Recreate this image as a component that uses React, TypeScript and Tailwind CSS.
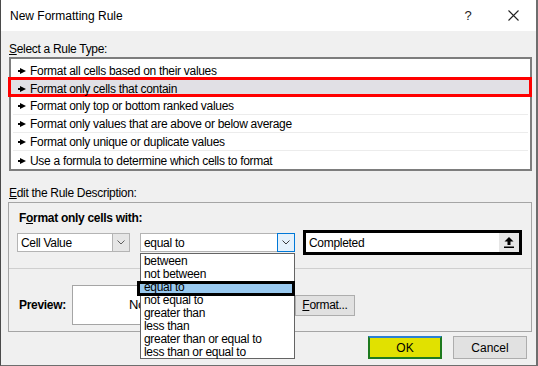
import React from "react";

const font = { fontFamily: '"Liberation Sans", Arial, sans-serif' };

const ruleTypes = [
  "Format all cells based on their values",
  "Format only cells that contain",
  "Format only top or bottom ranked values",
  "Format only values that are above or below average",
  "Format only unique or duplicate values",
  "Use a formula to determine which cells to format",
];

const operators = [
  "between",
  "not between",
  "equal to",
  "not equal to",
  "greater than",
  "less than",
  "greater than or equal to",
  "less than or equal to",
];

function Bullet() {
  return (
    <svg width="8" height="6" viewBox="0 0 8 6" className="shrink-0">
      <rect x="0" y="2" width="3" height="2" fill="#000" />
      <polygon points="2,0 8,3 2,6" fill="#000" />
    </svg>
  );
}

function Chevron({ color = "#5f5f5f" }: { color?: string }) {
  return (
    <svg width="8" height="5" viewBox="0 0 8 5">
      <polyline points="0.5,0.5 4,4 7.5,0.5" fill="none" stroke={color} strokeWidth="1" />
    </svg>
  );
}

function UploadIcon() {
  return (
    <svg width="10" height="11" viewBox="0 0 10 11">
      <polygon points="5,0 9.5,4.5 0.5,4.5" fill="#000" />
      <rect x="3.5" y="4" width="3" height="4" fill="#000" />
      <rect x="0" y="9.5" width="10" height="1.5" fill="#000" />
    </svg>
  );
}

export default function App() {
  return (
    <div
      className="w-[538px] h-[366px] flex flex-col bg-[#f0f0f0] border-l border-[#4a4a4a] border-r-2 border-r-[#6e6e6e] border-b border-b-[#6e6e6e] text-[12px] text-black overflow-hidden"
      style={font}
    >
      {/* title bar */}
      <div className="h-[31px] shrink-0 bg-white flex items-center">
        <div className="pl-[9px] flex-1 text-[12px]">New Formatting Rule</div>
        <div className="w-[46px] h-full flex items-center justify-center text-[13px] text-[#222]">?</div>
        <div className="w-[45px] h-full flex items-center justify-center">
          <svg width="11" height="11" viewBox="0 0 11 11">
            <path d="M0.5 0.5 L10.5 10.5 M10.5 0.5 L0.5 10.5" stroke="#222" strokeWidth="1.1" />
          </svg>
        </div>
      </div>

      {/* select a rule type */}
      <div className="h-[26px] pt-[10px] pl-[8px] leading-[16px] tracking-[-0.3px]">
        <span className="underline">S</span>elect a Rule Type:
      </div>
      <div className="ml-[8px] w-[523px] h-[114px] border-2 border-[#7d7d7d] bg-white pt-[2px]">
        {ruleTypes.map((t, i) => (
          <div key={t} className="relative h-[18px]">
            {i === 1 && (
              <div className="absolute -left-[3px] -right-[2px] -top-[2px] bottom-0 bg-[#e1e0e5] border-[3px] border-[#ff0000]" />
            )}
            <div
              className={
                "relative h-full mx-[2px] flex items-center gap-[4px] pl-[5px] pt-[1px] leading-[16px] tracking-[-0.3px] " +
                (i === 1 || i === 0 || i === 5 ? "" : "border-b border-[#ececec]")
              }
            >
              <Bullet />
              <span>{t}</span>
            </div>
          </div>
        ))}
      </div>

      {/* edit the rule description */}
      <div className="h-[31px] pt-[14px] pl-[8px] leading-[16px] tracking-[-0.3px]">
        <span className="underline">E</span>dit the Rule Description:
      </div>
      <div className="ml-[7px] w-[524px] h-[130px] border border-[#a5a5a5] flex flex-col">
        <div className="pt-[7px] pl-[10px] leading-[16px] font-bold tracking-[-0.3px]">
          F<span className="underline">o</span>rmat only cells with:
        </div>
        <div className="mt-[4px] h-[25px] flex items-center pl-[8px]">
          {/* combo 1 */}
          <div className="w-[113px] h-[19px] bg-white border border-[#b4b4b4] flex items-center">
            <span className="flex-1 pl-[3px] leading-[16px] tracking-[-0.3px]">Cell Value</span>
            <div className="w-[17px] h-[17px] bg-[#e6e6e6] border-l border-[#b4b4b4] flex items-center justify-center">
              <Chevron />
            </div>
          </div>
          {/* combo 2 with open list */}
          <div className="relative ml-[10px] w-[155px] h-[19px] bg-white border border-[#b4b4b4] flex items-center">
            <span className="flex-1 pl-[3px] leading-[16px] tracking-[-0.3px]">equal to</span>
            <div className="w-[18px] h-[19px] -mr-[1px] bg-[#e5f1fb] border border-[#0078d7] flex items-center justify-center">
              <Chevron color="#3a3a3a" />
            </div>
            <div className="absolute -left-[1px] top-[19px] w-[155px] h-[106px] bg-white border border-[#646464] z-10 pt-[1px]">
              {operators.map((o, i) => (
                <div key={o} className="relative h-[13px] leading-[13px] pl-[3px] tracking-[-0.3px]">
                  {i === 2 && (
                    <div className="absolute -left-[4px] -right-[1px] top-0 -bottom-[2px] bg-[#99c9ef] border-[3px] border-black" />
                  )}
                  <span className="relative">{o}</span>
                </div>
              ))}
            </div>
          </div>
          {/* completed input */}
          <div className="ml-[8px] w-[219px] h-[25px] border-[3px] border-black bg-white flex items-center">
            <span className="flex-1 pl-[3px] leading-[16px] tracking-[-0.3px]">Completed</span>
            <div className="w-[20px] h-[19px] bg-[#e6e6e6] flex items-center justify-center">
              <UploadIcon />
            </div>
          </div>
        </div>
        <div className="mt-[13px] h-px bg-[#cfcfcf]" />
        <div className="mt-[16px] h-[40px] flex items-center pl-[10px]">
          <div className="w-[53px] font-bold tracking-[-0.3px]">Preview:</div>
          <div className="w-[214px] h-[40px] bg-white border border-[#a5a5a5] flex items-center pl-[56px] tracking-[-0.3px] text-[13px]">
            No Format Set
          </div>
          <div className="ml-[9px] w-[60px] h-[21px] bg-[#e1e1e1] border border-[#adadad] flex items-center justify-center tracking-[-0.3px]">
            <span className="underline">F</span>ormat...
          </div>
        </div>
      </div>

      {/* buttons */}
      <div className="mt-[4px] flex justify-end gap-[11px] pr-[9px]">
        <div className="w-[74px] h-[23px] bg-[#e1e100] border-2 border-[#1e7a1e] border-t-[#2a7fd4] flex items-center justify-center">
          OK
        </div>
        <div className="w-[74px] h-[23px] bg-[#e1e1e1] border border-[#adadad] flex items-center justify-center">
          Cancel
        </div>
      </div>
    </div>
  );
}
